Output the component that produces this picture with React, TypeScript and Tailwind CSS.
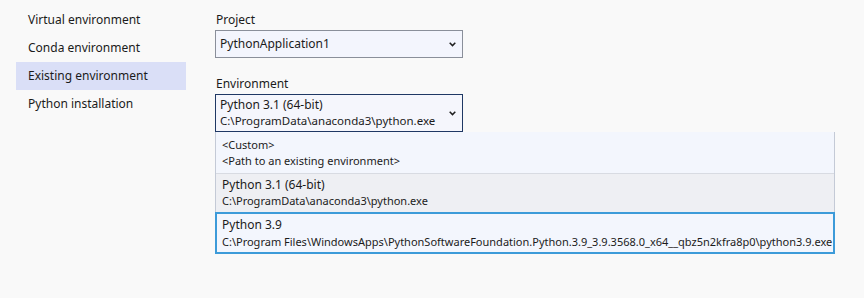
import React from "react";

const sideItems = ["Virtual environment", "Conda environment", "Existing environment", "Python installation"];

function Chevron() {
  return (
    <svg width="7" height="5" viewBox="0 0 7 5" className="shrink-0">
      <path d="M0.7 0.8 L3.5 3.6 L6.3 0.8" fill="none" stroke="#1e1e1e" strokeWidth="1.5" />
    </svg>
  );
}

export default function App() {
  return (
    <div className="w-[864px] h-[298px] bg-[#f9f9f9] flex text-[12px] text-[#1b1b1b]" style={{ fontFamily: '"Noto Sans", "Open Sans", sans-serif' }}>
      <div className="w-[186px] pl-4 pt-[6px] flex flex-col">
        {sideItems.map((s, i) => (
          <div key={s} className={`h-[28px] flex items-center pl-3 ${i === 2 ? "bg-[#dadff7]" : ""}`}>
            {s}
          </div>
        ))}
      </div>
      <div className="ml-[29px] pt-[10px] flex flex-col">
        <div className="h-[20px] pl-[1px] leading-[20px]">Project</div>
        <div className="w-[248px] h-[28px] border border-[#8a8f9a] bg-[#f3f5fd] flex items-center justify-between pl-[4px] pr-[6px]">
          <span>PythonApplication1</span>
          <Chevron />
        </div>
        <div className="h-[20px] mt-[16px] pl-[1px] leading-[20px]">Environment</div>
        <div className="w-[248px] h-[38px] border border-[#1f3864] bg-[#f5f6fc] flex items-center justify-between pl-[4px] pr-[6px]">
          <div className="flex flex-col leading-[16px]">
            <span>Python 3.1 (64-bit)</span>
            <span className="text-[11.5px]">C:\ProgramData\anaconda3\python.exe</span>
          </div>
          <Chevron />
        </div>
        <div className="w-[620px] border border-[#c4cad6] border-t-0 bg-[#f3f6fd] flex flex-col text-[11px]">
          <div className="h-[41px] flex flex-col justify-center pl-[6px] leading-[16px]">
            <span>&lt;Custom&gt;</span>
            <span>&lt;Path to an existing environment&gt;</span>
          </div>
          <div className="h-[39px] bg-[#eeeff3] border-t border-[#d8dbe2] flex flex-col justify-center pl-[6px] leading-[16px]">
            <span className="text-[12px]">Python 3.1 (64-bit)</span>
            <span>C:\ProgramData\anaconda3\python.exe</span>
          </div>
          <div className="h-[42px] border-2 border-[#3d9bd9] -mx-[1px] -mb-[1px] flex flex-col justify-center pl-[5px] leading-[17px]">
            <span className="text-[12px]">Python 3.9</span>
            <span>C:\Program Files\WindowsApps\PythonSoftwareFoundation.Python.3.9_3.9.3568.0_x64__qbz5n2kfra8p0\python3.9.exe</span>
          </div>
        </div>
      </div>
    </div>
  );
}
